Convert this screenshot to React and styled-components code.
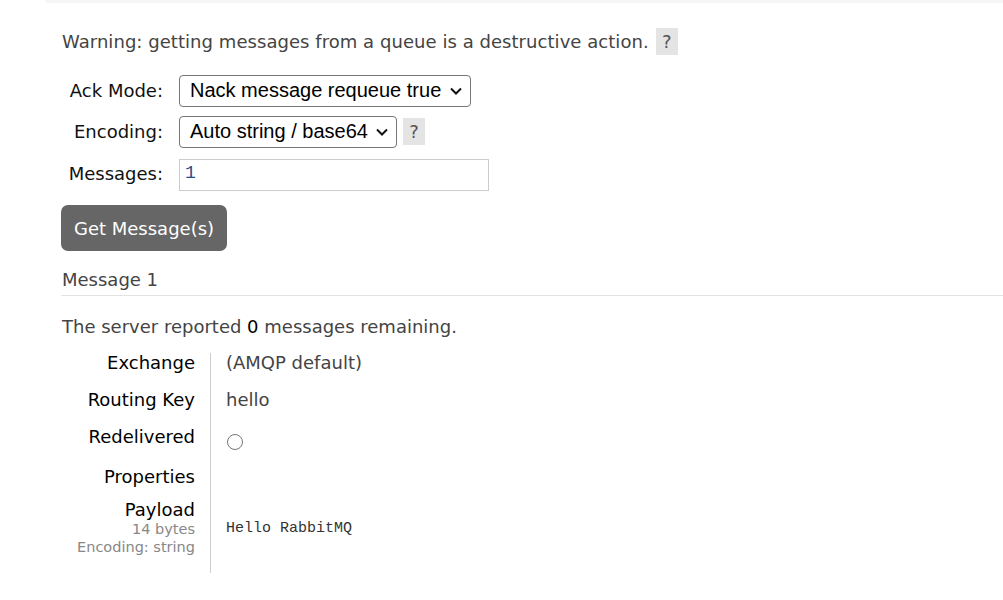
import React from 'react';
import styled, { createGlobalStyle } from 'styled-components';

const GlobalStyle = createGlobalStyle`
  html, body {
    margin: 0;
    padding: 0;
    background: #fff;
  }
  body {
    font-family: "DejaVu Sans", Verdana, sans-serif;
    font-size: 18px;
    color: #484848;
  }
`;

const Page = styled.div`
  width: 1003px;
  height: 600px;
  overflow: hidden;
`;

const TopStrip = styled.div`
  height: 3px;
  margin-left: 46px;
  background: #f6f6f6;
`;

const Content = styled.div`
  padding-left: 61px;
`;

const Warning = styled.p`
  display: flex;
  align-items: center;
  margin: 25px 0 0 1px;
  height: 27px;
  color: #444;
  letter-spacing: 0.05px;
`;

const Help = styled.span`
  display: inline-flex;
  align-items: center;
  justify-content: center;
  width: 22px;
  height: 27px;
  margin-left: ${({ gap }) => gap || 7}px;
  background: #e4e4e4;
  color: #555;
  font-size: 18px;
`;

const Form = styled.div`
  display: grid;
  grid-template-columns: 102px auto;
  column-gap: 16px;
  margin-top: 15px;
  align-items: center;
`;

const FormLabel = styled.div`
  text-align: right;
  color: #111;
  height: ${({ h }) => h}px;
  line-height: ${({ h }) => h}px;
`;

const FieldCell = styled.div`
  display: flex;
  align-items: center;
  height: ${({ h }) => h}px;
`;

const Select = styled.div`
  display: flex;
  align-items: center;
  justify-content: space-between;
  box-sizing: border-box;
  width: ${({ w }) => w}px;
  height: 32px;
  padding: 0 6px 0 10px;
  border: 1px solid #767676;
  border-radius: 4px;
  font-family: "Liberation Sans", Arial, sans-serif;
  font-size: 20px;
  color: #000;
`;

const Chevron = () => (
  <svg width="16" height="16" viewBox="0 0 16 16">
    <path d="M3 5.5 L8 10.5 L13 5.5" fill="none" stroke="#111" strokeWidth="2" />
  </svg>
);

const TextInput = styled.div`
  box-sizing: border-box;
  width: 310px;
  height: 32px;
  margin-top: 2px;
  padding: 3px 5px;
  border: 1px solid #ccc;
  font-family: "Liberation Mono", "Courier New", monospace;
  font-size: 18px;
  color: #1f4f8c;
`;

const Button = styled.button`
  display: block;
  margin-top: 10px;
  width: 166px;
  height: 46px;
  border: none;
  border-radius: 7px;
  background: #666;
  color: #fff;
  font-family: "DejaVu Sans", Verdana, sans-serif;
  font-size: 18px;
  padding: 0;
  cursor: pointer;
`;

const SectionTitle = styled.h3`
  margin: 19px 0 0;
  padding-bottom: 5px;
  border-bottom: 1px solid #e2e2e2;
  font-weight: normal;
  font-size: 18px;
  color: #444;
  line-height: 20px;
  padding-left: 1px;
`;

const Summary = styled.p`
  margin: 20px 0 0 1px;
  color: #444;
  line-height: 22px;
`;

const Strong = styled.span`
  color: #000;
`;

const Details = styled.div`
  display: grid;
  grid-template-columns: 150px auto;
  margin-top: 15px;
`;

const DetailLabel = styled.div`
  text-align: right;
  color: #000;
  padding-right: 15px;
  border-right: 1px solid #ccc;
  height: ${({ h }) => h}px;
  line-height: 20px;
`;

const DetailValue = styled.div`
  padding-left: 15px;
  height: ${({ h }) => h}px;
  line-height: 20px;
  color: #444;
  display: flex;
  align-items: flex-start;
`;

const SubNote = styled.div`
  font-size: 14.5px;
  color: #888;
  line-height: 18px;
`;

const Radio = styled.span`
  display: inline-block;
  width: 14px;
  height: 14px;
  margin-top: 7px;
  margin-left: 1px;
  border: 1px solid #767676;
  border-radius: 50%;
`;

const Payload = styled.pre`
  margin: 19px 0 0;
  font-family: "Liberation Mono", "Courier New", monospace;
  font-size: 15px;
  color: #333;
`;

const detailRows = [
  { label: 'Exchange', value: '(AMQP default)', h: 37 },
  { label: 'Routing Key', value: 'hello', h: 37 },
];

export default function App() {
  return (
    <Page>
      <GlobalStyle />
      <TopStrip />
      <Content>
        <Warning>
          Warning: getting messages from a queue is a destructive action.
          <Help>?</Help>
        </Warning>

        <Form>
          <FormLabel h={41}>Ack Mode:</FormLabel>
          <FieldCell h={41}>
            <Select w={292}>
              Nack message requeue true
              <Chevron />
            </Select>
          </FieldCell>

          <FormLabel h={41}>Encoding:</FormLabel>
          <FieldCell h={41}>
            <Select w={218}>
              Auto string / base64
              <Chevron />
            </Select>
            <Help gap={6}>?</Help>
          </FieldCell>

          <FormLabel h={43}>Messages:</FormLabel>
          <FieldCell h={43}>
            <TextInput>1</TextInput>
          </FieldCell>
        </Form>

        <Button>Get Message(s)</Button>

        <SectionTitle>Message 1</SectionTitle>

        <Summary>
          The server reported <Strong>0</Strong> messages remaining.
        </Summary>

        <Details>
          {detailRows.map((row) => (
            <React.Fragment key={row.label}>
              <DetailLabel h={row.h}>{row.label}</DetailLabel>
              <DetailValue h={row.h}>{row.value}</DetailValue>
            </React.Fragment>
          ))}
          <DetailLabel h={40}>Redelivered</DetailLabel>
          <DetailValue h={40}>
            <Radio />
          </DetailValue>
          <DetailLabel h={33}>Properties</DetailLabel>
          <DetailValue h={33} />
          <DetailLabel h={73}>
            Payload
            <SubNote>14 bytes</SubNote>
            <SubNote>Encoding: string</SubNote>
          </DetailLabel>
          <DetailValue h={73}>
            <Payload>Hello RabbitMQ</Payload>
          </DetailValue>
        </Details>
      </Content>
    </Page>
  );
}
